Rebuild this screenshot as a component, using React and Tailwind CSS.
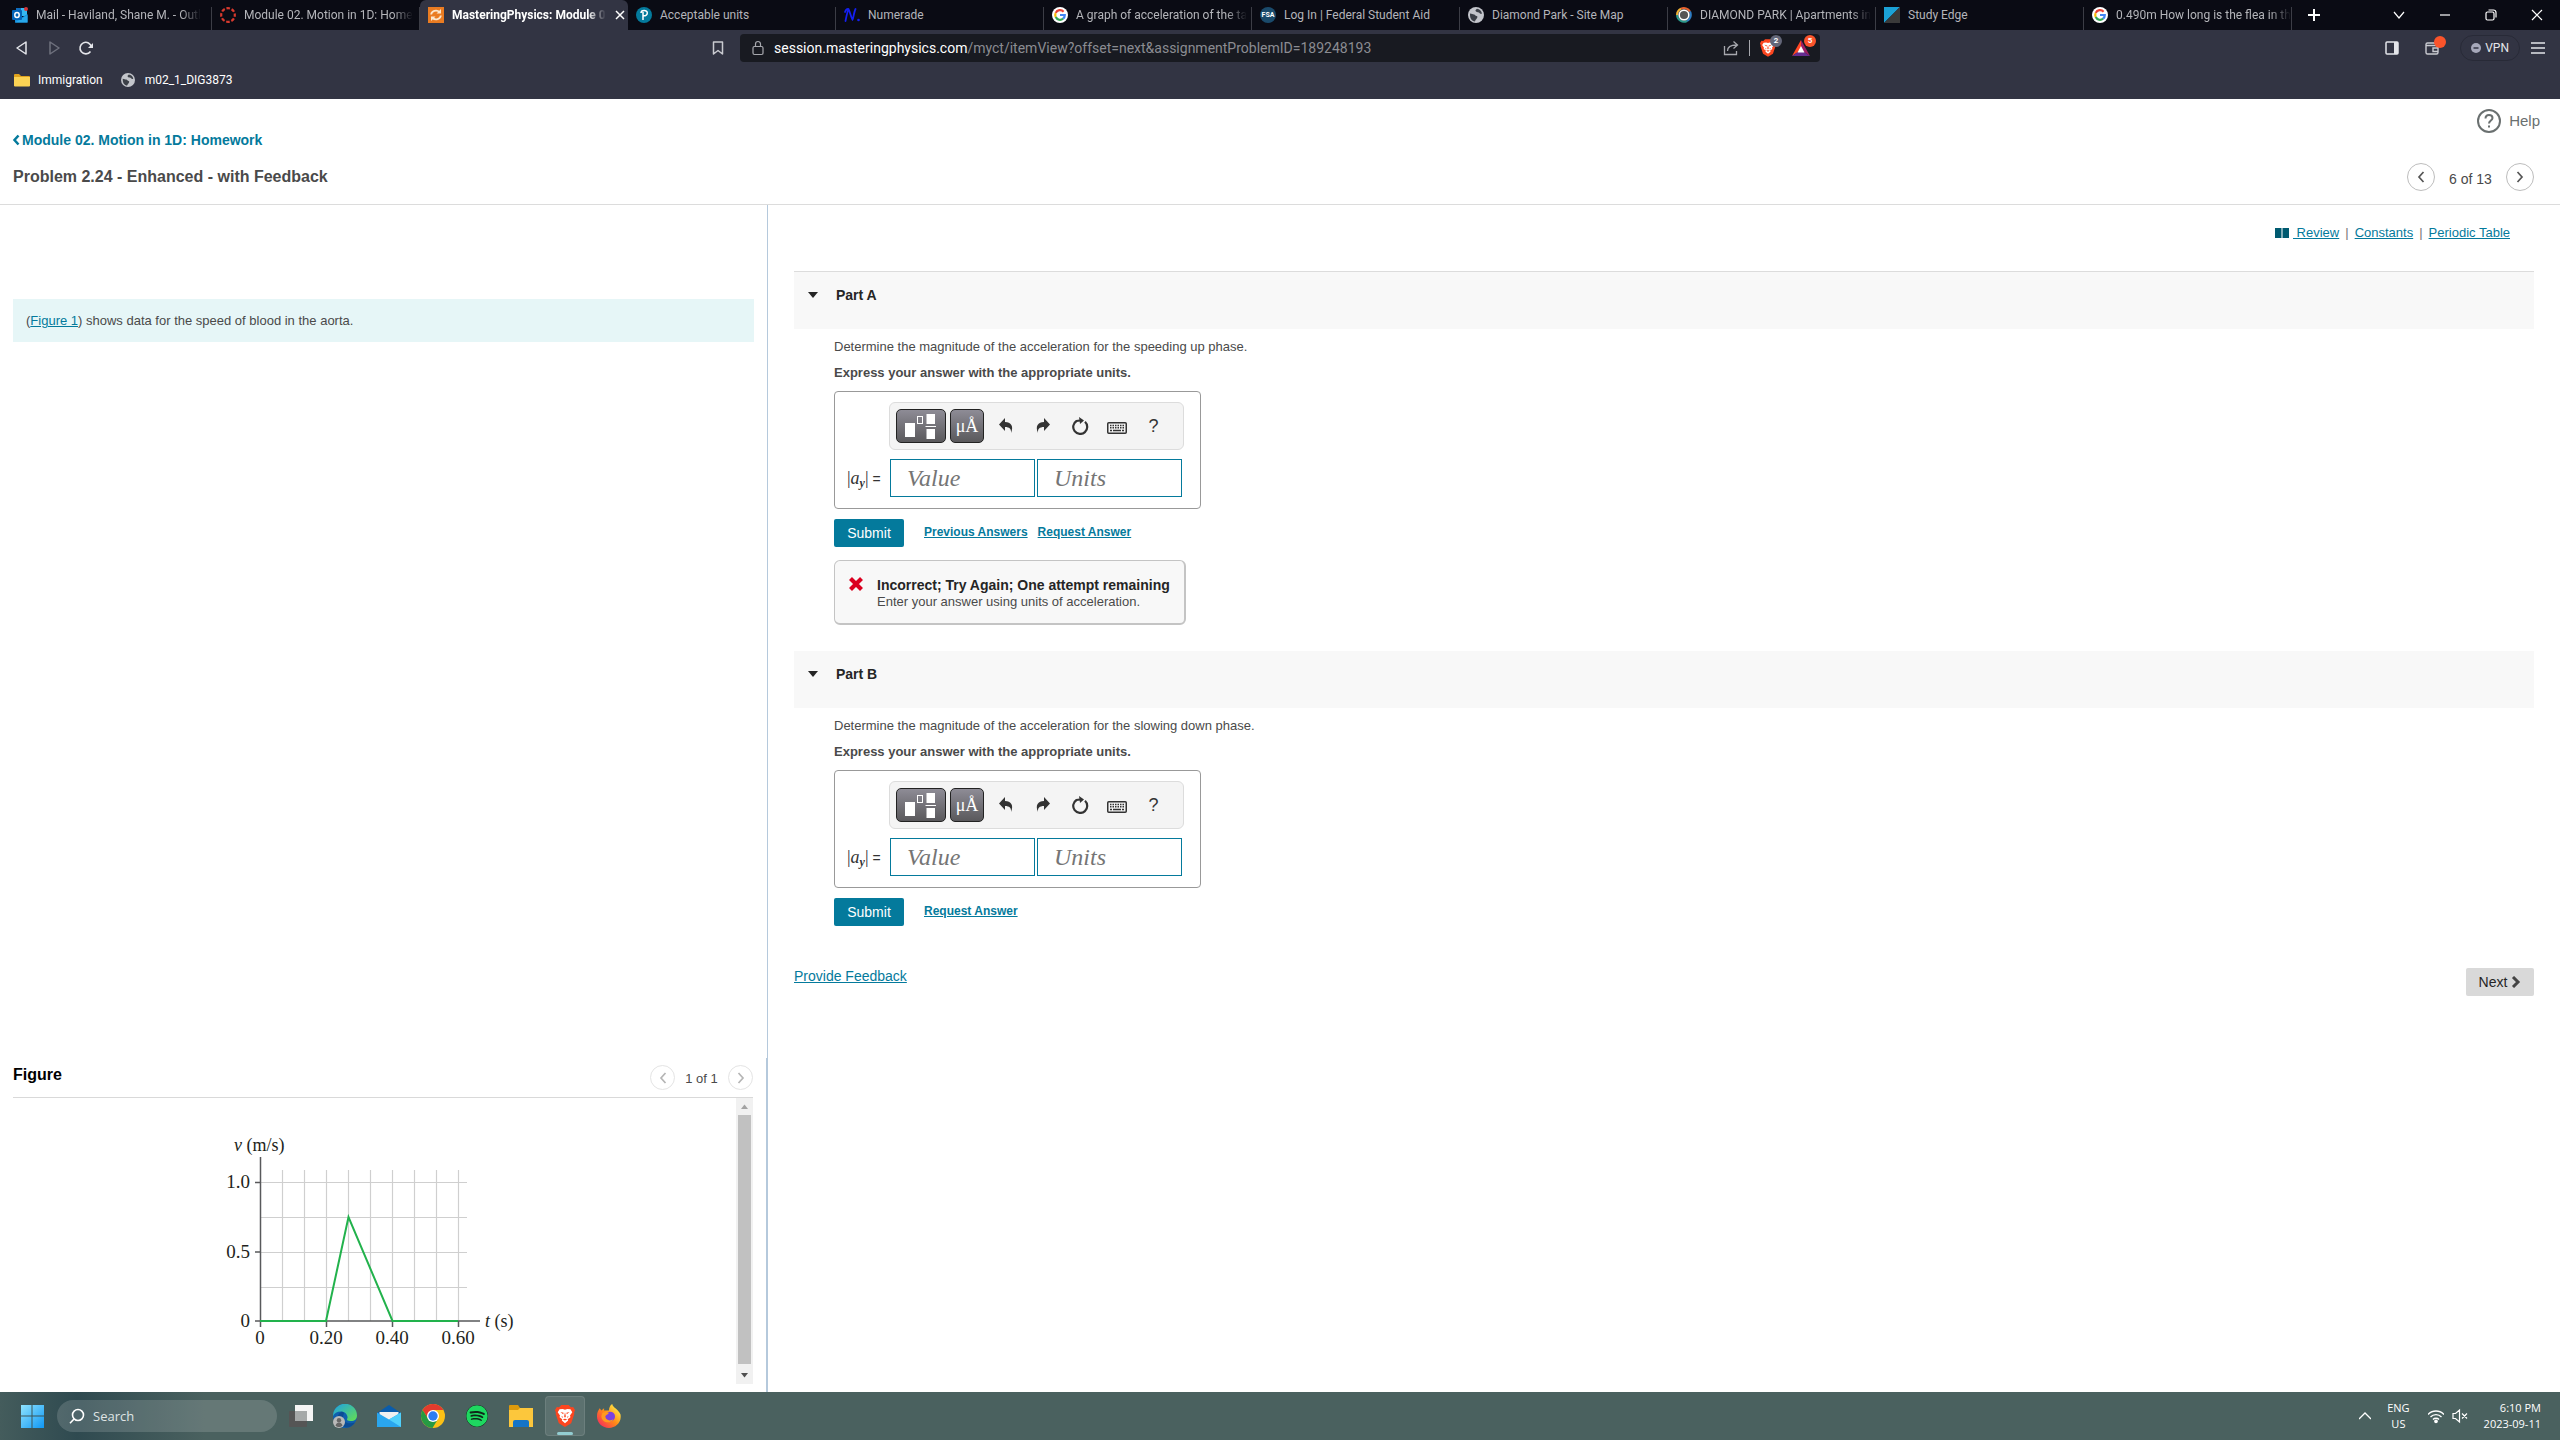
import { useState } from 'react';
import { FaSpotify } from 'react-icons/fa';

const BraveIcon = ({ className }) => (
  <svg className={className} viewBox="0 0 22 24">
    <path d="M7 0h8l2.500 2.500L20 2l2 3.500-1 3 .3 1-3.500 10.500L11 24l-6.800-4L.7 9.500l.3-1-1-3L2 2l2.500.5z" fill="#fb4620" />
    <path d="M11 5.200l2.500-.8 3.500.3 2 3.300-2.500 3.500.5 2-3 2 .5 1.500L11 20l-3.500-3 .5-1.500-3-2 .5-2L3 8l2-3.300 3.500-.3z" fill="#fff" />
    <path d="M6 7.500l3.500.8-.5 1.700zM16 7.500l-3.500.8.5 1.700zM11 8l-1 4.500 1 1.500 1-1.500zM7 12l2 1-1 1zM15 12l-2 1 1 1zM8.500 15.500L11 15l2.500.5L11 17z" fill="#fb4620" />
  </svg>
);

const GlobeIcon = ({ className }) => (
  <svg className={className} viewBox="0 0 16 16">
    <circle cx="8" cy="8" r="8" fill="#c3c5cb" />
    <path d="M2 6.500c2 0 2.600 1 4 1s1 1.500 2.500 1.500 1 2-.5 3.500c-1 1-1 2-1 2C3.500 14 2 11 2 8zM9 1.800C7.500 3 7 3.500 8 4.500s3 .5 3.500 1.500 2 1 2.500.5c-.5-2.500-2.500-4.500-5-4.700z" fill="#3c4048" />
  </svg>
);

const GoogleIcon = () => (
  <svg className="size-4" viewBox="0 0 16 16">
    <circle cx="8" cy="8" r="8" fill="#fff" />
    <g fill="none" strokeWidth="2.200">
      <path d="M11.600 4.700A4.800 4.800 0 0 0 3.700 5.900" stroke="#ea4335" />
      <path d="M3.700 5.900a4.800 4.800 0 0 0 0 4.200" stroke="#fbbc05" />
      <path d="M3.700 10.100a4.800 4.800 0 0 0 7.400 1.600" stroke="#34a853" />
      <path d="M11.100 11.700A4.800 4.800 0 0 0 12.800 8H8" stroke="#4285f4" />
    </g>
  </svg>
);

const OutlookIcon = () => (
  <svg className="size-4" viewBox="0 0 16 16">
    <path d="M4 1h11v8H4z" fill="#35b8f1" />
    <path d="M4 1h5v5H4z" fill="#0f6cbd" />
    <path d="M3 7l6 4 6.500-4v8.500H3z" fill="#1490df" />
    <path d="M3 15.500L15.500 8v7.500z" fill="#28a8ea" />
    <rect y="3" width="10" height="10" rx="1" fill="#0364b8" />
    <ellipse cx="5" cy="8" rx="2.200" ry="2.500" fill="none" stroke="#fff" strokeWidth="1.500" />
    <circle cx="14" cy="2" r="2" fill="#d13438" />
  </svg>
);

const CanvasIcon = () => (
  <svg className="size-4" viewBox="0 0 16 16">
    <circle cx="8" cy="8" r="6.800" fill="none" stroke="#d83a2e" strokeWidth="2.200" strokeDasharray="3.600 1.740" strokeDashoffset="1.800" />
  </svg>
);

const MasteringIcon = () => (
  <svg className="size-4" viewBox="0 0 16 16">
    <rect width="16" height="16" fill="#ea7c22" />
    <g fill="none" stroke="#fbe8cf" strokeWidth="1.800">
      <path d="M3.200 7.500C3.500 4 8.500 2.300 11.500 5" />
      <path d="M12.800 8.500c-.3 3.500-5.300 5.200-8.300 2.500" />
    </g>
    <path d="M13 2v4.500H8.500zM3 14V9.500h4.500z" fill="#fbe8cf" />
  </svg>
);

const PearsonIcon = () => (
  <svg className="size-4" viewBox="0 0 16 16">
    <circle cx="8" cy="8" r="8" fill="#047a9c" />
    <path d="M7 13V5M5 6c0-3.500 6.300-3.500 6.300 0C11.300 8.500 9 9 7.500 8.800" fill="none" stroke="#fff" strokeWidth="1.500" />
  </svg>
);

const NumeradeIcon = () => (
  <svg className="size-4" viewBox="0 0 16 16">
    <path d="M1.500 14C2.500 9 4 2 4.500 2S8 13 8.500 13 10 5 11.500 2M1 5c1-3 2.500-3.500 3.500-3" fill="none" stroke="#1420f0" strokeWidth="1.800" strokeLinecap="round" />
    <circle cx="14.500" cy="13" r="1.300" fill="#1420f0" />
  </svg>
);

const FsaIcon = () => (
  <span className="flex size-4 items-center justify-center rounded-full bg-[#1a4a6b] text-[7px] leading-none font-bold text-white">FSA</span>
);

const DiamondIcon = () => (
  <svg className="size-4" viewBox="0 0 16 16">
    <circle cx="8" cy="8" r="7" fill="#555" />
    <g fill="none" strokeWidth="2">
      <path d="M1 8a7 7 0 0 1 4-6.300" stroke="#f2b134" />
      <path d="M5 1.700A7 7 0 0 1 14 4.500" stroke="#e8602c" />
      <path d="M14 4.500A7 7 0 0 1 11 14" stroke="#2d7dc4" />
      <path d="M11 14A7 7 0 0 1 1 8" stroke="#2c9a8c" />
    </g>
    <circle cx="8" cy="8" r="4.800" fill="none" stroke="#fff" strokeWidth="1.500" />
  </svg>
);

const StudyEdgeIcon = () => (
  <svg className="size-4" viewBox="0 0 16 16">
    <path d="M0 0h16L0 16z" fill="#1ba1d6" />
    <path d="M16 0v16H0z" fill="#3a3a3a" />
  </svg>
);

const tabs = [
  { title: 'Mail - Haviland, Shane M. - Outl', icon: <OutlookIcon />, faded: true },
  { title: 'Module 02. Motion in 1D: Home', icon: <CanvasIcon />, faded: true },
  { title: 'MasteringPhysics: Module 0', icon: <MasteringIcon />, active: true },
  { title: 'Acceptable units', icon: <PearsonIcon /> },
  { title: 'Numerade', icon: <NumeradeIcon /> },
  { title: 'A graph of acceleration of the ta', icon: <GoogleIcon />, faded: true },
  { title: 'Log In | Federal Student Aid', icon: <FsaIcon /> },
  { title: 'Diamond Park - Site Map', icon: <GlobeIcon className="size-4" /> },
  { title: 'DIAMOND PARK | Apartments in', icon: <DiamondIcon />, faded: true },
  { title: 'Study Edge', icon: <StudyEdgeIcon /> },
  { title: '0.490m How long is the flea in th', icon: <GoogleIcon />, faded: true },
];

const fade = '[mask-image:linear-gradient(to_right,#000_88%,transparent)]';

const Tab = ({ title, icon, active, faded }) => (
  <div
    className={
      active
        ? 'flex w-52 items-center gap-2 rounded-t-md bg-[#323443] pl-2 pr-1.5 text-white'
        : 'flex w-52 items-center pl-2 text-[#b4b5ba]'
    }
  >
    <span className="shrink-0">{icon}</span>
    {active ? (
      <>
        <span className="flex-1 whitespace-nowrap font-bold">
          <span className={fade}>{title}</span>
        </span>
        <button aria-label="Close tab" className="shrink-0">
          <svg className="size-3" viewBox="0 0 12 12" stroke="#fff" strokeWidth="1.500">
            <path d="M2 2l8 8M10 2l-8 8" />
          </svg>
        </button>
      </>
    ) : (
      <span className="ml-2 flex h-full flex-1 items-center pt-[7px]">
        <span className="flex h-full w-full items-start border-r border-[#3c3d46]">
          <span className={`leading-4 whitespace-nowrap ${faded ? fade : ''}`}>{title}</span>
        </span>
      </span>
    )}
  </div>
);

const WindowButton = ({ label, d }) => (
  <button aria-label={label} className="flex h-full w-[46px] items-center justify-center">
    <svg className="size-3" viewBox="0 0 12 12" fill="none" stroke="#fff" strokeWidth="1.200">
      <path d={d} />
    </svg>
  </button>
);

const BrowserChrome = () => (
  <header className="bg-[#323443] font-[Roboto,sans-serif] text-xs text-white">
    <div className="flex h-[30px] bg-[#0a0b14] pl-1">
      {tabs.map((tab) => (
        <Tab key={tab.title} {...tab} />
      ))}
      <button aria-label="New tab" className="flex w-11 items-center justify-center">
        <svg className="size-3" viewBox="0 0 12 12" stroke="#fff" strokeWidth="2">
          <path d="M6 0v12M0 6h12" />
        </svg>
      </button>
      <div className="ml-auto flex">
        <WindowButton label="Search tabs" d="M1 3l5 6 5-6" />
        <WindowButton label="Minimize" d="M1 6h10" />
        <WindowButton label="Restore" d="M3.500 1h5a2.500 2.500 0 0 1 2.500 2.500v5M2.500 3h5A1.500 1.500 0 0 1 9 4.500v5A1.500 1.500 0 0 1 7.500 11h-5A1.500 1.500 0 0 1 1 9.500v-5A1.500 1.500 0 0 1 2.500 3z" />
        <WindowButton label="Close" d="M1 1l10 10M11 1L1 11" />
      </div>
    </div>

    <div className="grid h-9 grid-cols-[1fr_1080px_1fr] items-center">
      <div className="flex items-center pl-3.5 pr-3.5">
        <button aria-label="Back">
          <svg className="size-4" viewBox="0 0 16 16" fill="none" stroke="#e4e5ea" strokeWidth="1.500" strokeLinejoin="round">
            <path d="M12 2v12L3 8z" />
          </svg>
        </button>
        <button aria-label="Forward" className="ml-4">
          <svg className="size-4" viewBox="0 0 16 16" fill="none" stroke="#6f717e" strokeWidth="1.500" strokeLinejoin="round">
            <path d="M4 2v12l9-6z" />
          </svg>
        </button>
        <button aria-label="Reload" className="ml-4">
          <svg className="size-4" viewBox="0 0 16 16" fill="none" stroke="#e4e5ea" strokeWidth="1.600">
            <path d="M12.500 11.500A5.800 5.800 0 1 1 13.500 7" />
            <path d="M15 3v5h-5z" fill="#e4e5ea" stroke="none" />
          </svg>
        </button>
        <button aria-label="Bookmark" className="ml-auto">
          <svg className="size-4" viewBox="0 0 16 16" fill="none" stroke="#c9cad0" strokeWidth="1.500" strokeLinejoin="round">
            <path d="M3.500 2h9v12L8 10.500 3.500 14z" />
          </svg>
        </button>
      </div>
      <div className="flex h-7 items-center rounded bg-[#181a21] px-2.5">
        <svg className="size-4" viewBox="0 0 16 16" fill="none" stroke="#a7a8ae" strokeWidth="1.200">
          <rect x="3" y="6.500" width="10" height="8" rx="1.500" />
          <path d="M5.500 6.500V4a2.500 2.500 0 0 1 5 0v2.500" />
        </svg>
        <p className="ml-2 flex-1 text-sm text-[#8b8c92]">
          <span className="text-white">session.masteringphysics.com</span>/myct/itemView?offset=next&amp;assignmentProblemID=189248193
        </p>
        <svg className="size-4" viewBox="0 0 16 16" fill="none" stroke="#a7a8ae" strokeWidth="1.300">
          <path d="M1.500 6v8.500h12V11M4.500 11c0-4 3-6 9-6M10.500 1.500L14.500 5l-4 3.500" />
        </svg>
        <span className="mx-2.5 h-4 w-px bg-[#a7a8ae]" />
        <span className="relative">
          <BraveIcon className="h-[18px] w-4" />
          <span className="absolute -top-1 left-2.5 flex size-3 items-center justify-center rounded-full bg-[#636678] text-[8px] font-bold">2</span>
        </span>
        <span className="relative ml-4">
          <svg className="size-[18px]" viewBox="0 0 18 18">
            <path d="M9 1L0 17l9-6z" fill="#ff4724" />
            <path d="M9 1l9 16-9-6z" fill="#9e1f63" />
            <path d="M0 17h18l-9-6z" fill="#662d91" />
            <path d="M9 7l3.500 6.500h-7z" fill="#fff" />
          </svg>
          <span className="absolute -top-1 left-3 flex size-3 items-center justify-center rounded-full bg-[#fb542b] text-[8px] font-bold">5</span>
        </span>
      </div>
      <div className="flex items-center justify-end pr-3.5">
        <svg className="size-4" viewBox="0 0 16 16">
          <rect x="2" y="2" width="12" height="12" rx="1" fill="none" stroke="#e4e5ea" strokeWidth="1.500" />
          <path d="M10 2h4v12h-4z" fill="#e4e5ea" />
        </svg>
        <span className="relative ml-6">
          <svg className="size-4" viewBox="0 0 16 16" fill="none" stroke="#c9cad0" strokeWidth="1.400">
            <rect x="2" y="3" width="12" height="11" rx="1.500" />
            <path d="M2 5.500h12M14 8H9v3.500h5" />
          </svg>
          <span className="absolute -top-1 left-2.5 size-3 rounded-full bg-[#fb542b]" />
        </span>
        <button className="ml-5 flex h-[26px] items-center gap-1 rounded-full border border-[#282a37] px-2.5 text-[#e4e5ea]">
          <svg className="size-2.5" viewBox="0 0 10 10">
            <circle cx="5" cy="5" r="5" fill="#a6a8ba" />
            <path d="M2.500 5h5" stroke="#323443" strokeWidth="1.500" />
          </svg>
          VPN
        </button>
        <button aria-label="Menu" className="ml-2.5">
          <svg className="size-4" viewBox="0 0 16 16" stroke="#e4e5ea" strokeWidth="1.500">
            <path d="M1 3h14M1 8h14M1 13h14" />
          </svg>
        </button>
      </div>
    </div>

    <div className="flex h-[33px] items-center pb-1.5 pl-3.5">
      <svg className="size-4" viewBox="0 0 16 16">
        <path d="M0 3a1 1 0 0 1 1-1h4l2 2h8a1 1 0 0 1 1 1v9H0z" fill="#e0a21d" />
        <path d="M0 5h16v8.500a1 1 0 0 1-1 1H1a1 1 0 0 1-1-1z" fill="#fcd354" />
      </svg>
      <a href="#immigration" className="ml-2">Immigration</a>
      <GlobeIcon className="ml-[18px] size-3.5" />
      <a href="#dig3873" className="ml-2.5">m02_1_DIG3873</a>
    </div>
  </header>
);

const RoundButton = ({ label, d, muted }) => (
  <button
    aria-label={label}
    className={
      muted
        ? 'flex size-[25px] items-center justify-center rounded-full border border-[#e4e4e4] text-[#b5b5b5]'
        : 'flex size-7 items-center justify-center rounded-full border border-[#bdbdbd] text-[#555]'
    }
  >
    <svg className="size-3" viewBox="0 0 12 12" fill="none" stroke="currentColor" strokeWidth="1.700">
      <path d={d} />
    </svg>
  </button>
);

const LEFT = 'M8.500 1L4 6l4.500 5';
const RIGHT = 'M3.500 1L8 6l-4.500 5';

const PageHeader = () => (
  <div className="flex h-[106px] shrink-0 justify-between border-b border-[#dcdcdc] pl-3 pr-[26px]">
    <div className="pt-8">
      <a href="#module" className="flex items-center gap-0.5 text-sm leading-[18px] font-bold text-[#047a9c]">
        <svg className="h-3 w-2" viewBox="0 0 8 12" fill="none" stroke="currentColor" strokeWidth="2.500">
          <path d="M6.500 1.500L2.500 6l4 4.500" />
        </svg>
        Module 02. Motion in 1D: Homework
      </a>
      <h1 className="mt-[18px] pl-px text-base leading-5 font-bold text-[#4a4a4a]">Problem 2.24 - Enhanced - with Feedback</h1>
    </div>
    <div className="flex flex-col items-end pt-2.5">
      <button className="-mr-1.5 flex items-center gap-2 text-[15px] leading-6 text-[#6a7070]">
        <svg className="size-6" viewBox="0 0 24 24" fill="none" stroke="currentColor" strokeWidth="2">
          <circle cx="12" cy="12" r="11" />
          <path d="M8.500 9.500c0-5 7-4.500 7-.5 0 2.500-3.500 2.500-3.500 5.500M12 16.500v2" />
        </svg>
        Help
      </button>
      <div className="mt-[30px] flex items-center text-sm text-[#4a4a4a]">
        <RoundButton label="Previous item" d={LEFT} />
        <span className="w-[71px] pt-1 text-center">6 of 13</span>
        <RoundButton label="Next item" d={RIGHT} />
      </div>
    </div>
  </div>
);

const xLabels = [
  { x: 40, text: '0' },
  { x: 106, text: '0.20' },
  { x: 172, text: '0.40' },
  { x: 238, text: '0.60' },
];

const yLabels = [
  { y: 191, text: '0' },
  { y: 122, text: '0.5' },
  { y: 52, text: '1.0' },
];

const VelocityChart = () => (
  <svg className="h-[220px] w-[310px]" viewBox="0 0 310 220" role="img" aria-label="Velocity against time">
    <g stroke="#cfcfcf" strokeWidth="1.200">
      {[62, 84, 106, 128, 150, 172, 194, 216, 238].map((x) => (
        <path key={x} d={`M${x}.500 40V191`} />
      ))}
      {[52, 87, 122, 157].map((y) => (
        <path key={y} d={`M40 ${y}.500H247`} />
      ))}
    </g>
    <g stroke="#58595b" strokeWidth="1.500">
      <path d="M40.500 27V197M35 191H260M35 122h6M35 52.500h6M106.500 191v6M172.500 191v6M238.500 191v6" fill="none" />
    </g>
    <path d="M40 191H106L128.500 87L172.500 191H238" fill="none" stroke="#22b24c" strokeWidth="2" />
    <g className="font-['Liberation_Serif',serif] text-[19px]" fill="#231f20">
      <text x="14" y="21" className="text-[18px]"><tspan fontStyle="italic">v</tspan> (m/s)</text>
      <text x="265" y="197" className="text-[18px]"><tspan fontStyle="italic">t</tspan> (s)</text>
      {xLabels.map((l) => (
        <text key={l.text} x={l.x} y="214" textAnchor="middle">{l.text}</text>
      ))}
      {yLabels.map((l) => (
        <text key={l.text} x="30" y={l.y + 6} textAnchor="end">{l.text}</text>
      ))}
    </g>
  </svg>
);

const LeftPanel = () => (
  <section className="flex w-[30%] shrink-0 flex-col border-r border-[#b5c9dc]">
    <div className="ml-[13px] mr-[13px] mt-[94px] h-[43px] bg-[#e6f6f7] pl-[13px] text-[13px] leading-[43px] text-[#4a4a4a]">
      (<a href="#figure" className="text-[#047a9c] underline">Figure 1</a>) shows data for the speed of blood in the aorta.
    </div>
    <div className="mt-auto flex h-[334px] flex-col border-r border-[#b5c9dc] px-[13px] pt-[7px]">
      <div className="flex h-[33px] items-start justify-between border-b border-[#d9d9d9]">
        <h2 className="text-base leading-5 font-bold text-black">Figure</h2>
        <div className="flex items-center text-[13px] text-[#4a4a4a]">
          <RoundButton label="Previous figure" d={LEFT} muted />
          <span className="w-[53px] pt-0.5 text-center">1 of 1</span>
          <RoundButton label="Next figure" d={RIGHT} muted />
        </div>
      </div>
      <div className="flex h-[286px]">
        <div className="flex flex-1 justify-center pt-8">
          <VelocityChart />
        </div>
        <div className="flex w-[17px] flex-col items-center bg-[#f1f1f1]">
          <svg className="size-[17px]" viewBox="0 0 17 17"><path d="M5 11l3.500-4.500L12 11z" fill="#a3a3a3" /></svg>
          <div className="w-[13px] flex-1 bg-[#c1c1c1]" />
          <svg className="h-5 w-[17px]" viewBox="0 0 17 20"><path d="M5 9l3.500 4.500L12 9z" fill="#505050" /></svg>
        </div>
      </div>
    </div>
  </section>
);

const ToolButton = ({ label, children }) => (
  <button aria-label={label} className="flex w-[37px] items-center justify-center text-[#333]">{children}</button>
);

const darkKey = 'flex h-[34px] items-center justify-center rounded-[5px] border border-[#222] bg-linear-to-b from-[#8e8c96] to-[#5a595c] text-white';

const AnswerBox = ({ id }) => {
  const [value, setValue] = useState('');
  const [units, setUnits] = useState('');
  const field = "h-[38px] w-[145px] border border-[#047a9c] bg-white pl-4 font-['Liberation_Serif',serif] text-2xl leading-9 text-[#444] outline-none placeholder:text-[#757575] placeholder:italic";

  return (
    <div className="h-[118px] w-[367px] rounded-[4px] border border-[#999] pt-2.5">
      <div className="ml-[54px] flex h-12 w-[295px] items-center rounded-md border border-[#dcdcdc] bg-[#f4f4f4] pl-1.5">
        <button aria-label="Templates" className={`${darkKey} w-[50px]`}>
          <svg className="h-7 w-8" viewBox="0 0 32 28" fill="#fff">
            <rect x="0" y="11" width="10" height="14" />
            <rect x="12.500" y="4.500" width="5" height="7" fill="none" stroke="#fff" />
            <rect x="21.500" y="2" width="8.500" height="10" />
            <path d="M20.500 14.500h10.500" stroke="#fff" />
            <rect x="21.500" y="17" width="8.500" height="10" />
          </svg>
        </button>
        <button aria-label="Symbols" className={`${darkKey} ml-1 mr-[3px] w-[34px] font-['Liberation_Serif',serif] text-lg`}>μÅ</button>
        <ToolButton label="Undo">
          <svg className="size-4" viewBox="0 0 16 16">
            <path d="M7 0v4c6 0 9 4 6 11 .5-4-1.500-6-6-6v4L1 6.500z" fill="currentColor" />
          </svg>
        </ToolButton>
        <ToolButton label="Redo">
          <svg className="size-4" viewBox="0 0 16 16">
            <path d="M9 0v4c-6 0-9 4-6 11-.5-4 1.500-6 6-6v4l6-6.500z" fill="currentColor" />
          </svg>
        </ToolButton>
        <ToolButton label="Reset">
          <svg className="size-[18px]" viewBox="0 0 18 18">
            <path d="M14 4.800A7 7 0 1 1 5.500 4L9 3.500" fill="none" stroke="currentColor" strokeWidth="2.200" />
            <path d="M8 0l5 3.500L9 7z" fill="currentColor" />
          </svg>
        </ToolButton>
        <ToolButton label="Keyboard shortcuts">
          <svg className="mt-1 h-3 w-5" viewBox="0 0 20 12" fill="none" stroke="currentColor">
            <rect x=".75" y=".75" width="18.500" height="10.500" rx="1" strokeWidth="1.500" />
            <path d="M3 3.500h14M3 5.800h14" strokeWidth="1.400" strokeDasharray="1.500 1" />
            <path d="M3 8.500h2M6 8.500h8M15 8.500h2" strokeWidth="1.400" />
          </svg>
        </ToolButton>
        <ToolButton label="Help with the editor">
          <span className="text-lg leading-none">?</span>
        </ToolButton>
      </div>
      <div className="mt-[9px] flex items-center">
        <label htmlFor={`${id}-value`} className="w-[55px] pl-3 text-sm whitespace-nowrap text-[#333]">
          <span className="font-['Liberation_Serif',serif] text-lg leading-5">
            |<i>a</i><sub className="text-[12px] font-bold italic">y</sub>|
          </span>{' '}
          =
        </label>
        <input id={`${id}-value`} className={field} placeholder="Value" value={value} onChange={(e) => setValue(e.target.value)} />
        <input aria-label="Units" className={`${field} ml-0.5`} placeholder="Units" value={units} onChange={(e) => setUnits(e.target.value)} />
      </div>
    </div>
  );
};

const Part = ({ id, title, question, links, feedback, className }) => (
  <section className={className}>
    <div className="flex h-[57px] gap-[18px] bg-[#f8f8f8] pl-3.5 pt-3.5">
      <svg className="mt-1.5 h-1.5 w-2.5" viewBox="0 0 10 6"><path d="M0 0h10L5 6z" fill="#252525" /></svg>
      <h3 className="text-sm leading-[18px] font-bold text-[#252525]">{title}</h3>
    </div>
    <div className="pl-10 pt-2 text-[13px] text-[#4a4a4a]">
      <p className="leading-5">{question}</p>
      <p className="mt-1.5 mb-2 leading-5 font-bold">Express your answer with the appropriate units.</p>
      <AnswerBox id={id} />
      <div className="mt-2.5 flex h-7 items-center">
        <button className="h-7 w-[70px] rounded-[2px] bg-[#047a9c] text-sm text-white">Submit</button>
        <div className="ml-5 flex gap-2.5 pb-0.5 text-xs font-bold text-[#047a9c]">
          {links.map((link) => (
            <a key={link} href="#answers" className="underline">{link}</a>
          ))}
        </div>
      </div>
      {feedback && (
        <div className="mt-[13px] flex h-[65px] w-[352px] rounded-md border border-r-2 border-b-2 border-[#c4c4c4] bg-[#f8f8f8] pl-3.5 pt-4">
          <svg className="size-3.5" viewBox="0 0 14 14" stroke="#db0020" strokeWidth="4.200">
            <path d="M1.500 1.500l11 11M12.500 1.500l-11 11" />
          </svg>
          <div className="ml-3.5">
            <p className="text-sm leading-[17px] font-bold text-[#252525]">{feedback.title}</p>
            <p className="leading-4">{feedback.text}</p>
          </div>
        </div>
      )}
    </div>
  </section>
);

const RightPanel = () => (
  <main className="flex-1 px-[26px]">
    <nav className="flex h-[66px] items-start justify-end pr-6 pt-[18px] text-[13px] leading-5 text-[#777]">
      <svg className="mr-1 mt-1 h-3 w-3.5" viewBox="0 0 14 12" fill="#005a70">
        <path d="M0 1h6.500v10H0zM7.500 1H14v10H7.500z" />
      </svg>
      <a href="#review" className="text-[#047a9c] underline">&nbsp;Review</a>
      <span className="mx-1.5">|</span>
      <a href="#constants" className="text-[#047a9c] underline">Constants</a>
      <span className="mx-1.5">|</span>
      <a href="#periodic" className="text-[#047a9c] underline">Periodic Table</a>
    </nav>
    <Part
      id="part-a"
      className="border-t border-[#dcdcdc]"
      title="Part A"
      question="Determine the magnitude of the acceleration for the speeding up phase."
      links={['Previous Answers', 'Request Answer']}
      feedback={{
        title: 'Incorrect; Try Again; One attempt remaining',
        text: 'Enter your answer using units of acceleration.',
      }}
    />
    <Part
      id="part-b"
      className="mt-[26px]"
      title="Part B"
      question="Determine the magnitude of the acceleration for the slowing down phase."
      links={['Request Answer']}
    />
    <div className="mt-[42px] flex items-start justify-between text-sm">
      <a href="#feedback" className="leading-4 text-[#047a9c] underline">Provide Feedback</a>
      <button className="flex h-7 w-[68px] items-center justify-center gap-1 rounded-[2px] bg-[#d9d9d9] text-[#252525]">
        Next
        <svg className="h-3 w-2.5" viewBox="0 0 10 12" fill="none" stroke="#444" strokeWidth="3">
          <path d="M2 1l5 5-5 5" />
        </svg>
      </button>
    </div>
  </main>
);

const EdgeIcon = () => (
  <svg className="size-6" viewBox="0 0 24 24">
    <defs>
      <linearGradient id="edgeTop" x1="0" x2="1" y1="0" y2="1">
        <stop offset="0" stopColor="#1d9fe8" />
        <stop offset="1" stopColor="#66e04d" />
      </linearGradient>
    </defs>
    <circle cx="12" cy="12" r="12" fill="#0f5fae" />
    <path d="M0 12A12 12 0 0 1 24 11.500c0 4-3 6-7 5.500-3 0-3.500-1.500-2.500-3C15 11 12 7.500 8 7.500S1 9.500 0 12z" fill="url(#edgeTop)" />
    <path d="M8 8c-6 3-3 13 5 15.500 4 0 7-2 9-5-5 2-13 0-12-5 0-3 1.500-4 1-4.500S9.500 7.500 8 8z" fill="#0c4c94" />
    <circle cx="6" cy="18" r="6" fill="#b9b9b9" />
    <circle cx="6" cy="16.200" r="2.200" fill="#666" />
    <path d="M2.500 21.500c1-4 6-4 7 0-2 2-5 2-7 0z" fill="#666" />
  </svg>
);

const taskbarApps = [
  {
    name: 'Task view',
    icon: (
      <svg className="size-6" viewBox="0 0 24 24">
        <rect x="6" y="1" width="18" height="16" fill="#f4f4f4" />
        <rect y="7" width="18" height="16" rx="1" fill="#555" />
        <path d="M6 7h12v10H6z" fill="#a5a8a8" />
      </svg>
    ),
  },
  { name: 'Edge', icon: <EdgeIcon /> },
  {
    name: 'Mail',
    icon: (
      <svg className="size-6" viewBox="0 0 24 24">
        <path d="M0 9l12-8 12 8v5H0z" fill="#0a5cab" />
        <path d="M2.500 8h19v6l-9.500 4-9.500-4z" fill="#f0f0f0" />
        <path d="M0 8.500l12 7 12-7V23H0z" fill="#2aa6ee" />
        <path d="M24 8.500L12 15.500 24 23z" fill="#50d0fb" />
      </svg>
    ),
  },
  {
    name: 'Chrome',
    icon: (
      <svg className="size-6" viewBox="0 0 24 24">
        <circle cx="12" cy="12" r="12" fill="#fbc116" />
        <path d="M1.600 6A12 12 0 0 1 22.400 6H12L7 14.500z" fill="#e33b2e" />
        <path d="M1.600 6A12 12 0 0 0 11.500 24l5.500-9-10-.5z" fill="#269a43" />
        <circle cx="12" cy="12" r="6" fill="#fff" />
        <circle cx="12" cy="12" r="4.700" fill="#2c7df0" />
      </svg>
    ),
  },
  { name: 'Spotify', icon: <FaSpotify className="size-[22px] rounded-full bg-[#10261a] text-[#1ed760]" /> },
  {
    name: 'File Explorer',
    icon: (
      <svg className="size-6" viewBox="0 0 24 24">
        <path d="M0 2a1 1 0 0 1 1-1h8l2 3v5H0z" fill="#dd9a0c" />
        <path d="M0 6h9l2-2h13v19H0z" fill="#fcc73c" />
        <path d="M4 23v-5a2 2 0 0 1 2-2h12a2 2 0 0 1 2 2v5z" fill="#1574c7" />
      </svg>
    ),
  },
  { name: 'Brave', icon: <BraveIcon className="h-6 w-5" />, active: true },
  {
    name: 'Firefox',
    icon: (
      <svg className="size-6" viewBox="0 0 22 22">
        <defs>
          <linearGradient id="fox" x1="1" x2="0" y1="0" y2="1">
            <stop offset="0.100" stopColor="#fff14a" />
            <stop offset="0.500" stopColor="#ff8b16" />
            <stop offset="1" stopColor="#f5156c" />
          </linearGradient>
        </defs>
        <path d="M14 0c0 3 6 5 7.500 9.500C23 17 17 22 11 22S0 17.500 0 11.500C0 8 1 6 2.500 4L4 6l2.500-2v2L11 6c0-2.500 1-5 3-6z" fill="url(#fox)" />
        <circle cx="12" cy="11.500" r="4.500" fill="#7a42e0" />
        <path d="M5 8c2-1 4-1 6 0-1 2-3 2-3.500 3.500C8 15 12 16 15 14c-3 5-11 3-11-3z" fill="#ff9a1f" />
      </svg>
    ),
  },
];

const Taskbar = () => (
  <footer className="flex h-12 shrink-0 items-center bg-[#4a615f] bg-linear-to-r from-[#445c5c] from-0% via-[#2f4a50] via-3% to-[#4a615f] to-8% font-['Open_Sans',sans-serif] text-white">
    <button aria-label="Start" className="ml-5">
      <svg className="size-6" viewBox="0 0 24 24">
        <defs>
          <linearGradient id="win" x1="0" x2="1" y1="0" y2="1">
            <stop offset="0" stopColor="#8fe3fd" />
            <stop offset="1" stopColor="#0f97f5" />
          </linearGradient>
        </defs>
        <path d="M1 1h10.500v10.500H1zM12.500 1H24v10.500H12.500zM1 12.500h10.500V24H1zM12.500 12.500H24V24H12.500z" fill="url(#win)" />
      </svg>
    </button>
    <div className="ml-[13px] flex h-8 w-[220px] items-center rounded-full bg-white/15 pl-3">
      <svg className="size-4" viewBox="0 0 16 16" fill="none" stroke="#fff" strokeWidth="1.600">
        <circle cx="9" cy="7" r="5.500" />
        <path d="M5 11l-4 4.200" />
      </svg>
      <input aria-label="Search" placeholder="Search" className="ml-2 w-40 bg-transparent text-[13px] leading-5 outline-none placeholder:text-[#dfe4e4]" />
    </div>
    <div className="ml-1 flex gap-1">
      {taskbarApps.map((app) => (
        <button
          key={app.name}
          aria-label={app.name}
          className={
            app.active
              ? 'relative flex size-10 items-center justify-center rounded border border-white/10 bg-white/10'
              : 'flex size-10 items-center justify-center'
          }
        >
          {app.icon}
          {app.active && <span className="absolute bottom-0 h-[3px] w-4 rounded-full bg-[#93cdd1]" />}
        </button>
      ))}
    </div>
    <div className="ml-auto flex items-center pr-[19px] text-[11px] leading-4">
      <svg className="size-3" viewBox="0 0 12 12" fill="none" stroke="#fff" strokeWidth="1.300">
        <path d="M0 9l6-6 6 6" />
      </svg>
      <p className="ml-4 text-center">ENG<br />US</p>
      <svg className="ml-[18px] size-4" viewBox="0 0 16 16" fill="none" stroke="#fff" strokeWidth="1.300">
        <path d="M0 6.500c4.500-4.700 11.500-4.700 16 0M2.500 9c3-3.200 8-3.200 11 0M5 11.500c1.500-1.700 4.500-1.700 6 0" />
        <circle cx="8" cy="13.300" r="1.200" fill="#fff" />
      </svg>
      <svg className="ml-2 size-4" viewBox="0 0 16 16" fill="none" stroke="#fff" strokeWidth="1.200">
        <path d="M1 5.500v5h2.500L7.500 14V2L3.500 5.500zM10 5.500l5 5M15 5.500l-5 5" />
      </svg>
      <p className="ml-4 text-right">6:10 PM<br />2023-09-11</p>
    </div>
  </footer>
);

const App = () => (
  <div className="flex min-h-screen flex-col bg-white font-['Liberation_Sans',Arial,sans-serif]">
    <BrowserChrome />
    <PageHeader />
    <div className="flex flex-1">
      <LeftPanel />
      <RightPanel />
    </div>
    <Taskbar />
  </div>
);

export default App;
